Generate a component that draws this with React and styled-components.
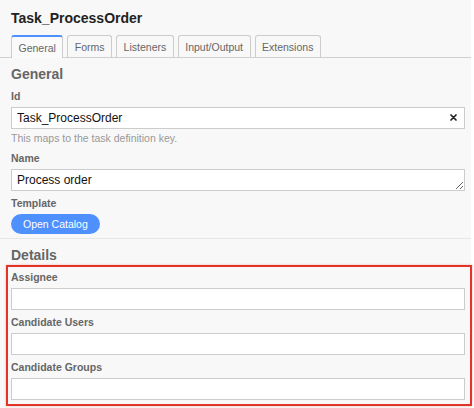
import React from "react";
import styled, { createGlobalStyle } from "styled-components";

const GlobalStyle = createGlobalStyle`
  html, body {
    margin: 0;
    padding: 0;
    background: #fff;
  }
  body {
    font-family: "Liberation Sans", Arial, Helvetica, sans-serif;
  }
`;

const Panel = styled.div`
  width: 471px;
  height: 408px;
  background: #f8f8f8;
  overflow: visible;
`;

const Title = styled.h1`
  margin: 0;
  padding: 10px 0 0 11px;
  font-size: 14px;
  line-height: 16px;
  font-weight: bold;
  color: #222;
`;

const TabBar = styled.div`
  display: flex;
  gap: 4px;
  margin-top: 9px;
  padding-left: 11px;
  height: 22px;
  border-bottom: 1px solid #d0d0d0;
`;

const Tab = styled.div`
  box-sizing: border-box;
  height: ${(p) => (p.$active ? "23px" : "22px")};
  padding: 0 6.5px;
  display: flex;
  align-items: center;
  font-size: 10.5px;
  color: #666;
  background: ${(p) => (p.$active ? "#fafafa" : "#f8f8f8")};
  border: 1px solid #ccc;
  border-top: ${(p) => (p.$active ? "2px solid #4d90fe" : "1px solid #ccc")};
  border-bottom: none;
  border-radius: 3px 3px 0 0;
  margin-bottom: ${(p) => (p.$active ? "-1px" : "0")};
`;

const Group = styled.div`
  padding: 0 6px ${(p) => p.$pad || 0}px 11px;
  border-bottom: ${(p) => (p.$line ? "1px solid #e6e6e6" : "none")};
`;

const GroupHeader = styled.div`
  margin: 7px 0 ${(p) => p.$mb || 0}px;
  font-size: 14px;
  line-height: 18px;
  font-weight: bold;
  color: #666;
`;

const Label = styled.label`
  display: block;
  font-size: 10.5px;
  line-height: 13px;
  font-weight: bold;
  color: #666;
  margin-top: ${(p) => p.$mt || 0}px;
  margin-bottom: 4px;
`;

const Field = styled.div`
  margin-bottom: ${(p) => (p.$last ? 0 : 6)}px;
`;

const InputWrap = styled.div`
  position: relative;
`;

const Input = styled.input`
  display: block;
  box-sizing: border-box;
  width: 100%;
  height: 22px;
  margin: 0;
  padding: 0 5px;
  border: 1px solid #ccc;
  border-radius: 0;
  background: #fff;
  font-family: "Liberation Sans", Arial, Helvetica, sans-serif;
  font-size: 12px;
  color: #111;
  outline: none;
`;

const TextArea = styled.textarea`
  display: block;
  box-sizing: border-box;
  width: 100%;
  height: 22px;
  margin: 0;
  padding: 3px 5px 0;
  border: 1px solid #ccc;
  border-radius: 0;
  background: #fff;
  font-family: "Liberation Sans", Arial, Helvetica, sans-serif;
  font-size: 12px;
  line-height: 14px;
  color: #111;
  resize: vertical;
  overflow: hidden;
  outline: none;
`;

const ClearButton = styled.span`
  position: absolute;
  right: 8px;
  top: 7px;
  width: 7px;
  height: 7px;
  display: flex;
`;

const Description = styled.div`
  margin-top: 3px;
  font-size: 10.5px;
  line-height: 13px;
  color: #999;
`;

const CatalogButton = styled.button`
  display: block;
  height: 20px;
  padding: 0 12px;
  border: none;
  border-radius: 10px;
  background: #4d90fe;
  color: #fff;
  font-family: "Liberation Sans", Arial, Helvetica, sans-serif;
  font-size: 10.5px;
  cursor: pointer;
`;

const Highlight = styled.div`
  margin: 0 -7px 0 -5px;
  padding: 4px 5px 4px 3px;
  border: 2px solid #e3342a;
  box-shadow: 0 0 2px rgba(227, 52, 42, 0.35);
`;

const tabs = ["General", "Forms", "Listeners", "Input/Output", "Extensions"];

const TextField = ({ label, value = "", last }) => (
  <Field $last={last}>
    <Label>{label}</Label>
    <Input defaultValue={value} />
  </Field>
);

export default function App() {
  return (
    <>
      <GlobalStyle />
      <Panel>
        <Title>Task_ProcessOrder</Title>
        <TabBar>
          {tabs.map((t) => (
            <Tab key={t} $active={t === "General"}>
              {t}
            </Tab>
          ))}
        </TabBar>

        <Group $line $pad={4}>
          <GroupHeader $mb={7}>General</GroupHeader>
          <Label>Id</Label>
          <InputWrap>
            <Input defaultValue="Task_ProcessOrder" />
            <ClearButton>
              <svg width="7" height="7" viewBox="0 0 7 7">
                <path
                  d="M1 1 L6 6 M6 1 L1 6"
                  stroke="#222"
                  strokeWidth="1.7"
                  strokeLinecap="round"
                />
              </svg>
            </ClearButton>
          </InputWrap>
          <Description>This maps to the task definition key.</Description>
          <Label $mt={7}>Name</Label>
          <Field>
            <TextArea rows={1} defaultValue="Process order" />
          </Field>
          <Label>Template</Label>
          <CatalogButton>Open Catalog</CatalogButton>
        </Group>

        <Group>
          <GroupHeader $mb={1}>Details</GroupHeader>
          <Highlight>
            <TextField label="Assignee" />
            <TextField label="Candidate Users" />
            <TextField label="Candidate Groups" last />
          </Highlight>
        </Group>
      </Panel>
    </>
  );
}
